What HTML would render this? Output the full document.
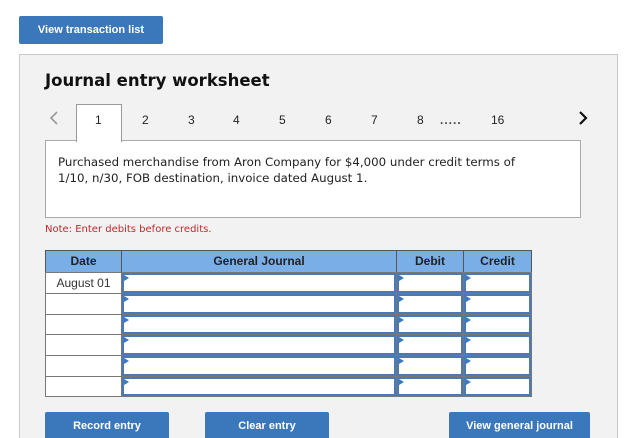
<!DOCTYPE html>
<html style="width:631px;height:438px;overflow:hidden"><head><style>
*{margin:0;padding:0;box-sizing:border-box}
body{width:631px;height:438px;background:#fff;position:relative;overflow:hidden;font-family:"Liberation Sans",Arial,sans-serif}
.a{position:absolute}
.btn{position:absolute;background:#3b77bb;color:#fff;font-size:11px;font-weight:bold;text-align:center;border-radius:2px}
.dv{font-family:"DejaVu Sans",Verdana,sans-serif}
.tab{position:absolute;top:113px;font-size:12px;color:#222}
.cell{position:absolute;background:#fff;border:1px solid #777}
.inp{position:absolute;background:#fff;border:2px solid #4a7ab5}
.inp::before{content:"";position:absolute;left:0;top:0;border-left:5px solid #3b78c5;border-top:3px solid transparent;border-bottom:3px solid transparent}
.hd{position:absolute;top:250px;height:23px;background:#7aaee6;border:1px solid #555;font-size:12px;font-weight:bold;color:#222;text-align:center;line-height:21px}
</style></head><body>
<div class="btn" style="left:19px;top:16px;width:144px;height:28px;line-height:28px">View transaction list</div>
<div class="a" style="left:19px;top:54px;width:599px;height:400px;background:#f2f2f2;border:1px solid #c8c8c8"></div>
<div class="a dv" style="left:45px;top:71px;font-size:16.5px;font-weight:bold;color:#111">Journal entry worksheet</div>
<svg class="a" style="left:48px;top:110px" width="12" height="16"><path d="M9 2 L3 8 L9 14" fill="none" stroke="#999" stroke-width="1.6"/></svg>
<svg class="a" style="left:577px;top:110px" width="12" height="16"><path d="M3 2 L9 8 L3 14" fill="none" stroke="#111" stroke-width="2.2"/></svg>
<div class="a" style="left:76px;top:104px;width:46px;height:38px;background:#fff;border:1px solid #999;border-bottom:none;z-index:2"></div>
<div class="tab" style="left:95px;z-index:3">1</div>
<div class="tab" style="left:142px">2</div>
<div class="tab" style="left:188px">3</div>
<div class="tab" style="left:233px">4</div>
<div class="tab" style="left:279px">5</div>
<div class="tab" style="left:325px">6</div>
<div class="tab" style="left:371px">7</div>
<div class="tab" style="left:417px">8</div>
<div class="tab" style="left:440px;font-weight:bold;letter-spacing:1px;color:#444">.....</div>
<div class="tab" style="left:491px">16</div>
<div class="a dv" style="left:45px;top:140px;width:536px;height:78px;background:#fff;border:1px solid #aaa;padding:13px 12px;font-size:11.8px;line-height:16px;color:#222">Purchased merchandise from Aron Company for $4,000 under credit terms of<br>1/10, n/30, FOB destination, invoice dated August 1.</div>
<div class="a dv" style="left:45px;top:224px;font-size:10px;color:#c0282a">Note: Enter debits before credits.</div>
<div class="hd" style="left:45px;width:77px">Date</div>
<div class="hd" style="left:121px;width:276px">General Journal</div>
<div class="hd" style="left:396px;width:68px">Debit</div>
<div class="hd" style="left:463px;width:69px">Credit</div>
<div class="cell" style="left:45px;top:272px;width:77px;height:22px;font-size:12px;color:#333;text-align:center;line-height:20px">August 01</div>
<div class="cell" style="left:45px;top:293px;width:77px;height:22px"></div>
<div class="cell" style="left:45px;top:314px;width:77px;height:21px"></div>
<div class="cell" style="left:45px;top:334px;width:77px;height:22px"></div>
<div class="cell" style="left:45px;top:355px;width:77px;height:22px"></div>
<div class="cell" style="left:45px;top:376px;width:77px;height:21px"></div>
<div class="a" style="left:121px;top:272px;width:411px;height:125px;background:#777"></div>
<div class="inp" style="left:122px;top:273px;width:274px;height:20px"></div><div class="inp" style="left:397px;top:273px;width:66px;height:20px"></div><div class="inp" style="left:464px;top:273px;width:67px;height:20px"></div>
<div class="inp" style="left:122px;top:294px;width:274px;height:20px"></div><div class="inp" style="left:397px;top:294px;width:66px;height:20px"></div><div class="inp" style="left:464px;top:294px;width:67px;height:20px"></div>
<div class="inp" style="left:122px;top:315px;width:274px;height:19px"></div><div class="inp" style="left:397px;top:315px;width:66px;height:19px"></div><div class="inp" style="left:464px;top:315px;width:67px;height:19px"></div>
<div class="inp" style="left:122px;top:335px;width:274px;height:20px"></div><div class="inp" style="left:397px;top:335px;width:66px;height:20px"></div><div class="inp" style="left:464px;top:335px;width:67px;height:20px"></div>
<div class="inp" style="left:122px;top:356px;width:274px;height:20px"></div><div class="inp" style="left:397px;top:356px;width:66px;height:20px"></div><div class="inp" style="left:464px;top:356px;width:67px;height:20px"></div>
<div class="inp" style="left:122px;top:377px;width:274px;height:19px"></div><div class="inp" style="left:397px;top:377px;width:66px;height:19px"></div><div class="inp" style="left:464px;top:377px;width:67px;height:19px"></div>
<div class="btn" style="left:45px;top:412px;width:124px;height:30px;line-height:28px">Record entry</div>
<div class="btn" style="left:205px;top:412px;width:124px;height:30px;line-height:28px">Clear entry</div>
<div class="btn" style="left:449px;top:412px;width:141px;height:30px;line-height:28px">View general journal</div>
</body></html>
